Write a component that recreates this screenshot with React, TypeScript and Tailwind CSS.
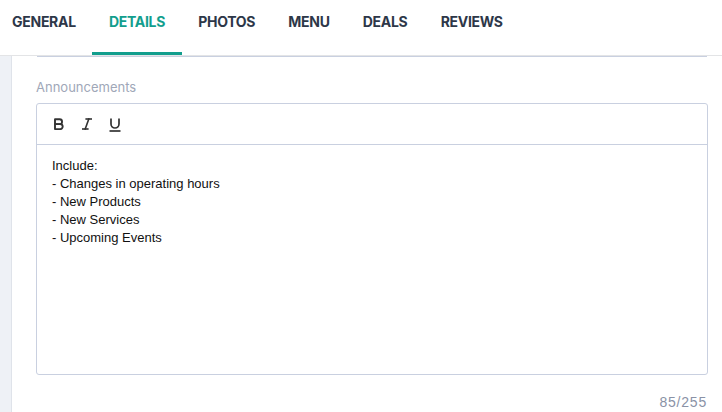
import React from "react";

const tabs = ["GENERAL", "DETAILS", "PHOTOS", "MENU", "DEALS", "REVIEWS"];

const lines = [
  "Include:",
  "- Changes in operating hours",
  "- New Products",
  "- New Services",
  "- Upcoming Events",
];

function BoldIcon() {
  return (
    <svg width="12" height="12" viewBox="0 0 12 12" fill="none" stroke="#333" strokeWidth="1.9" strokeLinejoin="round">
      <path d="M2 1.2H6.6a2.45 2.45 0 0 1 0 4.9H2Z" />
      <path d="M2 6.1H7.2a2.5 2.5 0 0 1 0 5H2Z" />
    </svg>
  );
}

function ItalicIcon() {
  return (
    <svg width="10" height="12" viewBox="0 0 10 12" fill="none" stroke="#333" strokeWidth="1.6" strokeLinecap="square">
      <path d="M4.2 1H9.2" />
      <path d="M0.8 11H5.8" />
      <path d="M6.8 1L3.2 11" />
    </svg>
  );
}

function UnderlineIcon() {
  return (
    <svg width="12" height="14" viewBox="0 0 12 14" fill="none" stroke="#333" strokeWidth="1.7">
      <path d="M2 0.5V6a4 4 0 0 0 8 0V0.5" />
      <path d="M0.5 13H11.5" />
    </svg>
  );
}

export default function App() {
  return (
    <div className="w-[722px] h-[412px] bg-white overflow-hidden flex flex-col font-['Inter',sans-serif]">
      {/* tab bar */}
      <div className="h-[56px] shrink-0 border-b border-[#e3e4e6] flex -ml-[4.5px]">
        {tabs.map((tab) => (
          <div key={tab} className="flex flex-col h-full">
            <span
              className={`px-[16.6px] pt-[12px] text-[14px] leading-5 font-bold tracking-[-0.3px] ${
                tab === "DETAILS" ? "text-[#129e8d]" : "text-[#2d3748]"
              }`}
            >
              {tab}
            </span>
            <div className="flex-1" />
            <div className={`h-[3px] ${tab === "DETAILS" ? "bg-[#129e8d]" : ""}`} />
          </div>
        ))}
      </div>

      <div className="flex flex-1 min-h-0">
        {/* side strip */}
        <div className="w-[12px] shrink-0 bg-[#eef1f6] border-r border-[#dfe3ea]" />

        <div className="flex-1 pl-[24px] pr-[14px] flex flex-col">
          <div className="h-px bg-[#c9d0e0] ml-px mr-px" />

          <label className="mt-[22px] block h-4 leading-4 text-[13px] text-[#a0a7b8]">Announcements</label>

          <div className="mt-[8px] h-[272px] border border-[#c9d0e0] rounded-[3px] flex flex-col">
            <div className="h-[41px] shrink-0 border-b border-[#c9d0e0] flex items-center pl-[8px]">
              <button className="w-[28px] h-[28px] flex items-center justify-center">
                <BoldIcon />
              </button>
              <button className="w-[28px] h-[28px] flex items-center justify-center">
                <ItalicIcon />
              </button>
              <button className="w-[28px] h-[28px] flex items-center justify-center pt-[2px]">
                <UnderlineIcon />
              </button>
            </div>
            <div className="pt-[12px] px-[15px] font-['Liberation_Sans',Arial,sans-serif] text-[13px] leading-[18px] text-[#111]">
              {lines.map((line) => (
                <div key={line}>{line}</div>
              ))}
            </div>
          </div>

          <div className="mt-[17px] pr-px text-right font-['Liberation_Sans',Arial,sans-serif] text-[14px] leading-5 tracking-[0.8px] text-[#8a92a6]">
            85/255
          </div>
        </div>
      </div>
    </div>
  );
}
